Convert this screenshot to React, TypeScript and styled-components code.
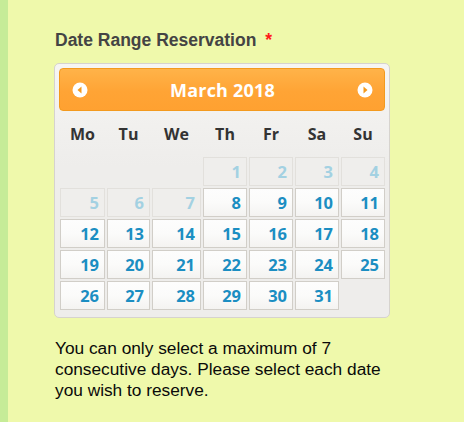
import React from "react";
import styled, { createGlobalStyle } from "styled-components";

const Global = createGlobalStyle`
  html, body { margin: 0; padding: 0; }
  body { background: #eff9ab; font-family: "Liberation Sans", Arial, sans-serif; }
`;

const Page = styled.div`
  display: flex;
  min-height: 422px;
`;

const Strip = styled.div`
  width: 8px;
  flex: none;
  background: #c6ec98;
`;

const Content = styled.div`
  padding: 30px 0 0 46px;
  display: flex;
  flex-direction: column;
  width: 336px;
`;

const Label = styled.div`
  font-family: "Liberation Sans", Arial, sans-serif;
  font-weight: bold;
  font-size: 17.5px;
  line-height: 20px;
  color: #444444;
  padding-left: 1px;
`;

const Required = styled.span`
  color: #ff1a1a;
  margin-left: 9px;
`;

const Calendar = styled.div`
  margin-top: 13px;
  width: 336px;
  box-sizing: border-box;
  border: 1px solid #d6d3ce;
  border-radius: 5px;
  background: linear-gradient(#f6f5f3, #eeedeb 40%, #eeedeb);
  padding: 4px 4px 7px 4px;
  font-family: "Open Sans", "DejaVu Sans", sans-serif;
`;

const Header = styled.div`
  height: 43px;
  box-sizing: border-box;
  border: 1px solid #f39a1e;
  border-radius: 4px;
  background: linear-gradient(#ffb349, #ffa435 55%, #ffa131);
  display: flex;
  align-items: center;
  justify-content: space-between;
  padding: 0 11px 0 12px;
`;

const Title = styled.div`
  color: #ffffff;
  font-weight: bold;
  font-size: 18px;
  letter-spacing: 0.2px;
`;

const NavIcon = ({ dir }: { dir: "prev" | "next" }) => (
  <svg width="16" height="16" viewBox="0 0 16 16">
    <circle cx="8" cy="8" r="7.5" fill="#ffffff" />
    {dir === "prev" ? (
      <polygon points="9.5,4.5 9.5,11.5 5.5,8" fill="#f39a1e" />
    ) : (
      <polygon points="6.5,4.5 6.5,11.5 10.5,8" fill="#f39a1e" />
    )}
  </svg>
);

const Grid = styled.div`
  display: grid;
  grid-template-columns: 45px 43px 49px 44px 44px 44px 44px;
  grid-auto-rows: 29px;
  column-gap: 2px;
  row-gap: 2px;
  margin-left: 1px;
`;

const HeadRow = styled.div`
  display: grid;
  grid-template-columns: 45px 43px 49px 44px 44px 44px 44px;
  column-gap: 2px;
  margin-left: 1px;
  height: 46px;
  align-items: center;
`;

const DayName = styled.div`
  display: flex;
  align-items: center;
  justify-content: center;
  font-weight: bold;
  font-size: 16px;
  color: #333333;
`;

const Cell = styled.div<{ $disabled?: boolean }>`
  box-sizing: border-box;
  border: 1px solid ${(p) => (p.$disabled ? "#e2e0dc" : "#d1cec8")};
  background: ${(p) =>
    p.$disabled
      ? "#efeeec"
      : "linear-gradient(#fdfdfd, #fbfbfa 50%, #f4f3f1)"};
  color: ${(p) => (p.$disabled ? "#a3d1e2" : "#1b8ec2")};
  font-weight: bold;
  font-size: 16.5px;
  display: flex;
  align-items: center;
  justify-content: flex-end;
  padding-right: 5px;
`;

const Empty = styled.div``;

const Note = styled.p`
  margin: 20px 0 0 0;
  font-family: "Liberation Sans", Arial, sans-serif;
  font-size: 17.3px;
  line-height: 21px;
  color: #0a0a0a;
  padding-left: 1px;
`;

const days = ["Mo", "Tu", "We", "Th", "Fr", "Sa", "Su"];

export default function App() {
  const cells: React.ReactNode[] = [];
  for (let i = 0; i < 3; i++) cells.push(<Empty key={"e" + i} />);
  for (let d = 1; d <= 31; d++) {
    cells.push(
      <Cell key={d} $disabled={d <= 7}>
        {d}
      </Cell>
    );
  }
  return (
    <>
      <Global />
      <Page>
        <Strip />
        <Content>
          <Label>
            Date Range Reservation<Required>*</Required>
          </Label>
          <Calendar>
            <Header>
              <NavIcon dir="prev" />
              <Title>March 2018</Title>
              <NavIcon dir="next" />
            </Header>
            <HeadRow>
              {days.map((d) => (
                <DayName key={d}>{d}</DayName>
              ))}
            </HeadRow>
            <Grid>{cells}</Grid>
          </Calendar>
          <Note>
            You can only select a maximum of 7 consecutive days. Please select
            each date you wish to reserve.
          </Note>
        </Content>
      </Page>
    </>
  );
}
